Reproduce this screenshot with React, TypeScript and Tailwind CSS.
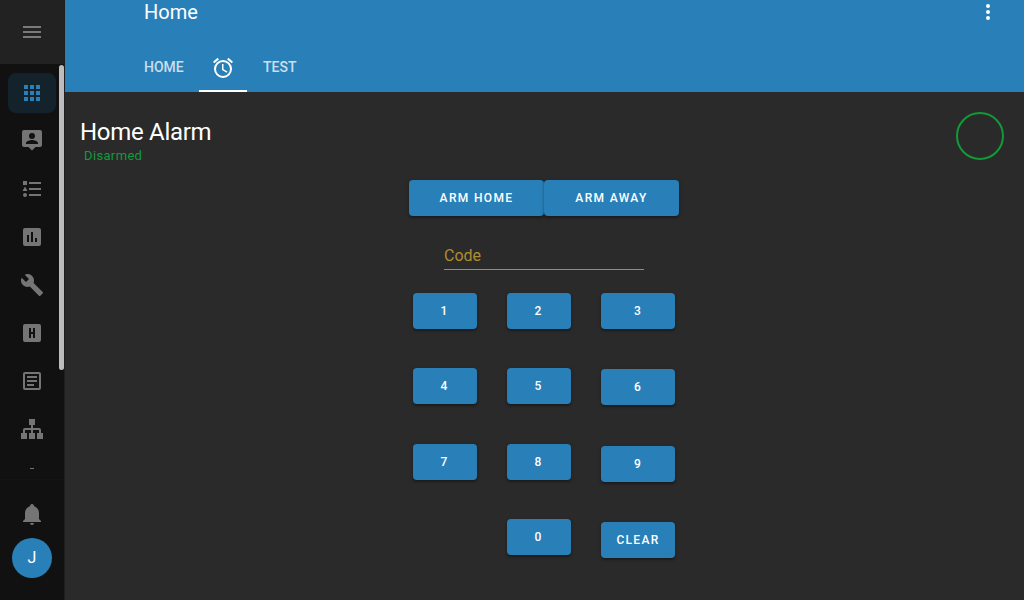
import React from 'react';

const icons = {
  menu: 'M3,6H21V8H3V6M3,11H21V13H3V11M3,16H21V18H3V16Z',
  apps: 'M16,20H20V16H16M16,14H20V10H16M10,8H14V4H10M16,8H20V4H16M10,14H14V10H10M4,14H8V10H4M4,20H8V16H4M10,20H14V16H10M4,8H8V4H4V8Z',
  marker:
    'M4,1H20A2,2 0 0,1 22,3V16A2,2 0 0,1 20,18H15.5L12,21.5L8.5,18H4A2,2 0 0,1 2,16V3A2,2 0 0,1 4,1ZM12,4A3,3 0 0,0 9,7A3,3 0 0,0 12,10A3,3 0 0,0 15,7A3,3 0 0,0 12,4ZM6,15H18V14C18,12 14,11 12,11C10,11 6,12 6,14V15Z',
  list: 'M5,9.5L7.5,14H2.5L5,9.5M3,4H7V8H3V4M5,20A2,2 0 0,0 7,18A2,2 0 0,0 5,16A2,2 0 0,0 3,18A2,2 0 0,0 5,20M9,5V7H21V5H9M9,19H21V17H9V19M9,13H21V11H9V13Z',
  poll: 'M17,17H15V13H17V17ZM13,17H11V7H13V17ZM9,17H7V10H9V17ZM19,3H5C3.89,3 3,3.89 3,5V19A2,2 0 0,0 5,21H19A2,2 0 0,0 21,19V5C21,3.89 20.1,3 19,3Z',
  wrench:
    'M22.7,19L13.6,9.9C14.5,7.6 14,4.9 12.1,3C10.1,1 7.1,0.6 4.7,1.7L9,6L6,9L1.6,4.7C0.4,7.1 0.9,10.1 2.9,12.1C4.8,14 7.5,14.5 9.8,13.6L18.9,22.7C19.3,23.1 19.9,23.1 20.3,22.7L22.6,20.4C23.1,20 23.1,19.3 22.7,19Z',
  hbox: 'M9,7V17H11V13H13V17H15V7H13V11H11V7H9ZM5,3H19A2,2 0 0,1 21,5V19A2,2 0 0,1 19,21H5A2,2 0 0,1 3,19V5A2,2 0 0,1 5,3Z',
  text: 'M5,3C3.89,3 3,3.89 3,5V19C3,20.11 3.89,21 5,21H19C20.11,21 21,20.11 21,19V5C21,3.89 20.11,3 19,3H5M5,5H19V19H5V5M7,7V9H17V7H7M7,11V13H17V11H7M7,15V17H14V15H7Z',
  sitemap:
    'M9,2V8H11V11H5C3.89,11 3,11.89 3,13V16H1V22H7V16H5V13H11V16H9V22H15V16H13V13H19V16H17V22H23V16H21V13C21,11.89 20.11,11 19,11H13V8H15V2H9Z',
  bell: 'M21,19V20H3V19L5,17V11C5,7.9 7.03,5.17 10,4.29C10,4.19 10,4.1 10,4A2,2 0 0,1 12,2A2,2 0 0,1 14,4C14,4.1 14,4.19 14,4.29C16.97,5.17 19,7.9 19,11V17L21,19M14,21A2,2 0 0,1 12,23A2,2 0 0,1 10,21',
  alarm:
    'M12,20A7,7 0 0,1 5,13A7,7 0 0,1 12,6A7,7 0 0,1 19,13A7,7 0 0,1 12,20M12,4A9,9 0 0,0 3,13A9,9 0 0,0 12,22A9,9 0 0,0 21,13A9,9 0 0,0 12,4M12.5,8H11V14L15.75,16.85L16.5,15.62L12.5,13.25V8M7.88,3.39L6.6,1.86L2,5.71L3.29,7.24L7.88,3.39M22,5.72L17.4,1.86L16.11,3.39L20.71,7.25L22,5.72Z',
  dots: 'M12,16A2,2 0 0,1 14,18A2,2 0 0,1 12,20A2,2 0 0,1 10,18A2,2 0 0,1 12,16M12,10A2,2 0 0,1 14,12A2,2 0 0,1 12,14A2,2 0 0,1 10,12A2,2 0 0,1 12,10M12,4A2,2 0 0,1 14,6A2,2 0 0,1 12,8A2,2 0 0,1 10,6A2,2 0 0,1 12,4Z',
};

const Icon = ({ d, className }: { d: string; className?: string }) => (
  <svg viewBox="0 0 24 24" className={`w-6 h-6 fill-current ${className ?? ''}`} fillRule="evenodd">
    <path d={d} />
  </svg>
);

const navIcons = [icons.apps, icons.marker, icons.list, icons.poll, icons.wrench, icons.hbox, icons.text, icons.sitemap];

const KeyButton = ({ label, wide }: { label: string; wide?: boolean }) => (
  <button
    className={`h-9 ${wide ? 'w-[74px]' : 'w-16 pr-px'} rounded bg-[#2980b9] text-white text-xs font-medium tracking-[1.3px] shadow-[0_2px_2px_rgba(0,0,0,0.25),0_1px_4px_rgba(0,0,0,0.2)]`}
  >
    {label}
  </button>
);

const Sidebar = () => (
  <aside className="relative w-[65px] h-[600px] shrink-0 flex flex-col bg-[#111111] border-r border-[#1f1f1f] overflow-hidden">
    <div className="h-16 shrink-0 flex items-center justify-center bg-[#222222] text-[#7a7a7a]">
      <Icon d={icons.menu} />
    </div>
    <nav className="flex-1 pt-[9px] flex flex-col">
      {navIcons.map((d, i) => (
        <div key={i} className="h-12 shrink-0 flex items-start">
          <div
            className={`ml-2 w-12 h-10 rounded-lg flex items-center justify-center ${
              i === 0 ? 'bg-[#14222c] text-[#2980b9]' : 'text-[#757575]'
            }`}
          >
            <Icon d={d} />
          </div>
        </div>
      ))}
      <div className="ml-[30px] mt-[11px] w-1 h-px bg-[#757575]" />
    </nav>
    <div className="border-t border-[#141414] shrink-0 h-[121px]">
      <div className="h-[58px] pt-[9px] flex items-center justify-center text-[#757575]">
        <Icon d={icons.bell} />
      </div>
      <div className="ml-3 w-10 h-10 rounded-full bg-[#2980b9] flex items-center justify-center text-white text-base">
        J
      </div>
    </div>
    {/* overlay scrollbar */}
    <div className="absolute left-[59px] top-[65px] w-[5px] h-[305px] rounded-sm bg-[#bdbdbd]" />
  </aside>
);

const App = () => {
  return (
    <div className="w-[1024px] h-[600px] flex overflow-hidden bg-[#2a2a2a] font-[Roboto,sans-serif]">
      <Sidebar />
      <main className="flex-1 flex flex-col min-w-0">
        <header className="h-[92px] shrink-0 bg-[#2980b9] text-white flex flex-col">
          <div className="h-[43px] flex items-start justify-between pl-[79px] pr-6">
            <h1 className="text-xl leading-6">Home</h1>
            <Icon d={icons.dots} />
          </div>
          <div className="flex h-[49px] pl-[63px]">
            <div className="w-[71px] pl-4 pb-px flex items-center text-sm font-medium text-white/75">HOME</div>
            <div className="w-12 pt-[3px] flex items-center justify-center border-b-2 border-white">
              <Icon d={icons.alarm} />
            </div>
            <div className="px-4 pb-px flex items-center text-sm font-medium text-white/75">TEST</div>
          </div>
        </header>

        <section className="flex-1 flex flex-col pr-px">
          <div className="flex justify-between pl-[15px] pr-[19px] pt-5 h-[88px]">
            <div className="pt-[5px]">
              <div className="text-2xl leading-[30px] tracking-[-0.3px] text-white">Home Alarm</div>
              <div className="ml-1 text-[13px] leading-4 tracking-[0.35px] text-[#0f9d3a] mt-[1px]">Disarmed</div>
            </div>
            <div className="w-12 h-12 rounded-full border-2 border-[#109a38]" />
          </div>

          <div className="flex justify-center">
            <button className="w-[135px] h-9 rounded bg-[#2980b9] text-white text-xs font-medium tracking-[1.35px] shadow-[0_2px_2px_rgba(0,0,0,0.25),0_1px_4px_rgba(0,0,0,0.2)]">
              ARM HOME
            </button>
            <button className="w-[135px] h-9 rounded bg-[#2980b9] text-white text-xs font-medium tracking-[1.35px] shadow-[0_2px_2px_rgba(0,0,0,0.25),0_1px_4px_rgba(0,0,0,0.2)]">
              ARM AWAY
            </button>
          </div>

          <div className="mx-auto mt-[26px] w-[200px] h-[28px] border-b border-[#a98c44] text-[#b08d2e] text-base leading-[27px]">
            Code
          </div>

          <div className="flex justify-center gap-[30px] mt-[23px]">
            <div className="flex flex-col gap-[39.33px]">
              <KeyButton label="1" />
              <KeyButton label="4" />
              <KeyButton label="7" />
            </div>
            <div className="flex flex-col gap-[39.33px]">
              <KeyButton label="2" />
              <KeyButton label="5" />
              <KeyButton label="8" />
              <KeyButton label="0" />
            </div>
            <div className="flex flex-col gap-[40.4px]">
              <KeyButton label="3" wide />
              <KeyButton label="6" wide />
              <KeyButton label="9" wide />
              <KeyButton label="CLEAR" wide />
            </div>
          </div>
        </section>
      </main>
    </div>
  );
};

export default App;
